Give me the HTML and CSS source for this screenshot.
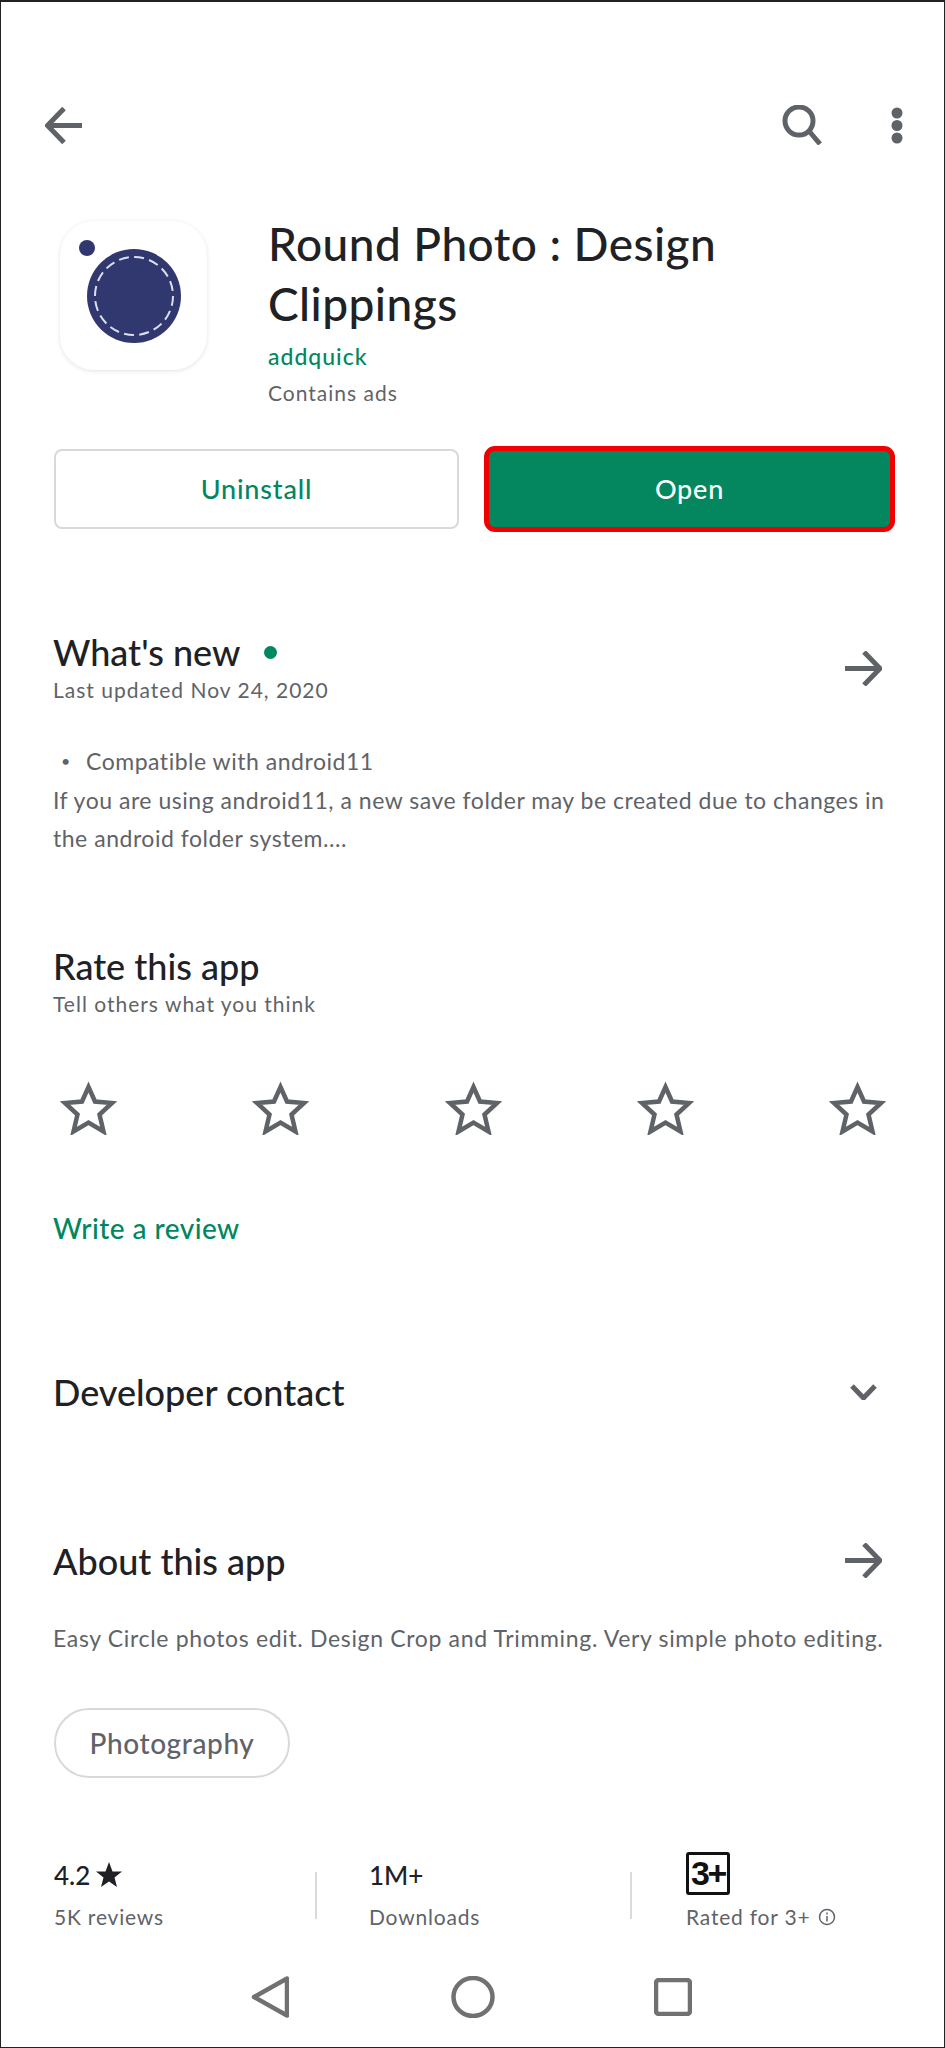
FILE: index.html
```html
<!DOCTYPE html>
<html lang="en">
<head>
<meta charset="utf-8">
<title>Round Photo : Design Clippings</title>
<link rel="stylesheet" href="styles.css">
</head>
<body>
<div class="page">
  <header class="topbar">
    <svg class="ic-back" viewBox="0 0 38 37"><path d="M37 18.500H3M19 1.500 2.500 18.500 19 35.500"/></svg>
    <div class="topbar-right">
      <svg class="ic-search" viewBox="0 0 41 40"><circle cx="18" cy="16" r="14"/><path d="M28 26 39 39"/></svg>
      <svg class="ic-dots" viewBox="0 0 14 38"><circle cx="7" cy="7" r="5.500"/><circle cx="7" cy="19.500" r="5.500"/><circle cx="7" cy="32" r="5.500"/></svg>
    </div>
  </header>

  <section class="hero">
    <svg class="app-icon" viewBox="0 0 147 149">
      <circle class="logo-fill" cx="27" cy="27" r="8"/>
      <circle class="logo-fill" cx="74" cy="75" r="47"/>
      <circle class="logo-stitch" cx="74" cy="75" r="39"/>
    </svg>
    <div class="hero-text">
      <h1 class="title">Round Photo : Design<br>Clippings</h1>
      <div class="dev">addquick</div>
      <div class="note">Contains ads</div>
    </div>
  </section>

  <div class="actions">
    <button class="btn btn-outline">Uninstall</button>
    <button class="btn btn-solid">Open</button>
  </div>

  <section class="whatsnew">
    <div class="row-head">
      <div>
        <h2 class="h2">What's new<span class="new-dot"></span></h2>
        <div class="sub">Last updated Nov 24, 2020</div>
      </div>
      <svg class="ic-forward" viewBox="0 0 37 35"><path d="M0 17.500H34M19 1 35 17.500 19 34"/></svg>
    </div>
    <div class="notes">
      <div class="bullet"><span class="bullet-mark">•</span>Compatible with android11</div>
      <div>If you are using android11, a new save folder may be created due to changes in</div>
      <div>the android folder system....</div>
    </div>
  </section>

  <section class="rate">
    <h2 class="h2">Rate this app</h2>
    <div class="sub">Tell others what you think</div>
    <div class="stars">
      <svg class="star" viewBox="0 0 57 54"><polygon points="28.500,6 35,20.500 52,22 39.500,33.500 43.500,50.500 28.500,41.500 13.500,50.500 17.500,33.500 5,22 22,20.500"/></svg>
      <svg class="star" viewBox="0 0 57 54"><polygon points="28.500,6 35,20.500 52,22 39.500,33.500 43.500,50.500 28.500,41.500 13.500,50.500 17.500,33.500 5,22 22,20.500"/></svg>
      <svg class="star" viewBox="0 0 57 54"><polygon points="28.500,6 35,20.500 52,22 39.500,33.500 43.500,50.500 28.500,41.500 13.500,50.500 17.500,33.500 5,22 22,20.500"/></svg>
      <svg class="star" viewBox="0 0 57 54"><polygon points="28.500,6 35,20.500 52,22 39.500,33.500 43.500,50.500 28.500,41.500 13.500,50.500 17.500,33.500 5,22 22,20.500"/></svg>
      <svg class="star" viewBox="0 0 57 54"><polygon points="28.500,6 35,20.500 52,22 39.500,33.500 43.500,50.500 28.500,41.500 13.500,50.500 17.500,33.500 5,22 22,20.500"/></svg>
    </div>
    <div class="write">Write a review</div>
  </section>

  <section class="developer row-head">
    <h2 class="h2">Developer contact</h2>
    <svg class="ic-chevron" viewBox="0 0 27 16"><path d="M2 2 13.500 14 25 2"/></svg>
  </section>

  <section class="about">
    <div class="row-head">
      <h2 class="h2">About this app</h2>
      <svg class="ic-forward" viewBox="0 0 37 35"><path d="M0 17.500H34M19 1 35 17.500 19 34"/></svg>
    </div>
    <p class="desc">Easy Circle photos edit. Design Crop and Trimming. Very simple photo editing.</p>
    <div class="chip">Photography</div>
  </section>

  <section class="stats">
    <div class="stat stat-first">
      <div class="stat-top"><span class="stat-val">4.2</span><svg class="ic-mini-star" viewBox="0 0 26 25"><polygon points="13,0 16.500,9.500 26,9.500 18.500,15.500 21,25 13,19.500 5,25 7.500,15.500 0,9.500 9.500,9.500"/></svg></div>
      <div class="stat-label">5K reviews</div>
    </div>
    <div class="stat">
      <div class="stat-top"><span class="stat-val">1M+</span></div>
      <div class="stat-label">Downloads</div>
    </div>
    <div class="stat stat-last">
      <div class="stat-top"><span class="rated-box">3+</span></div>
      <div class="stat-label">Rated for 3+<svg class="ic-info" viewBox="0 0 18 18"><circle cx="9" cy="9" r="7.500"/><path d="M9 8V13.500M9 4.500V6.500"/></svg></div>
    </div>
  </section>

  <nav class="navbar">
    <svg class="nav-back" viewBox="0 0 38 42"><path d="M36 2.500V39.500L3 21Z"/></svg>
    <svg class="nav-home" viewBox="0 0 44 42"><ellipse cx="22" cy="21" rx="19.500" ry="19"/></svg>
    <svg class="nav-recent" viewBox="0 0 38 38"><rect x="2" y="2" width="34" height="34" rx="3"/></svg>
  </nav>
</div>
</body>
</html>
```

FILE: styles.css
```css
* { box-sizing: border-box; }
html, body { margin: 0; padding: 0; background: #fff; }
.page {
  width: 945px;
  height: 2048px;
  border: 1px solid #222;
  border-top-width: 2px;
  padding-left: 53px;
  padding-right: 51px;
  overflow: hidden;
  font-family: "Lato", "Liberation Sans", sans-serif;
  color: #202124;
  background: #fff;
}
svg { display: block; flex: none; }

.topbar { display: flex; justify-content: space-between; align-items: center; height: 40px; margin-top: 103px; margin-left: -9px; margin-right: -7px; }
.topbar-right { display: flex; align-items: center; gap: 68px; }
.ic-back { width: 38px; height: 37px; fill: none; stroke: #5f6368; stroke-width: 5; }
.ic-search { width: 41px; height: 40px; fill: none; stroke: #5f6368; stroke-width: 5; }
.ic-dots { width: 14px; height: 38px; fill: #5f6368; margin-right: -4px; }

.hero { display: flex; margin-top: 69px; }
.app-icon {
  width: 147px; height: 149px; margin: 7px 0 0 6px;
  background: #fff; border-radius: 34px;
  box-shadow: 0 1px 4px rgba(60, 64, 67, .15);
}
.logo-fill { fill: #31376f; }
.logo-stitch { fill: none; stroke: #dcdfee; stroke-width: 2; stroke-dasharray: 10 5.300; }
.hero-text { margin-left: 61px; }
.title { margin: 0; font-size: 46px; line-height: 60px; font-weight: 500; letter-spacing: .45px; }
.dev { margin-top: 7px; font-size: 23px; line-height: 30px; color: #01875f; letter-spacing: 1px; font-weight: 500; }
.note { margin-top: 7px; font-size: 21px; line-height: 30px; color: #5f6368; letter-spacing: 1px; }

.actions { display: flex; align-items: center; gap: 25px; margin-top: 38px; }
.btn { font-family: inherit; font-size: 27px; font-weight: 500; letter-spacing: .8px; border-radius: 8px; padding: 0 0 2px; flex: none; }
.btn-outline { width: 405px; height: 80px; background: #fff; border: 2px solid #d8d9da; color: #01875f; }
.btn-solid { width: 411px; height: 86px; background: #04875f; border: 5px solid #f00000; color: #fff; border-radius: 11px; }

.row-head { display: flex; justify-content: space-between; align-items: flex-start; }
.h2 { margin: -1px 0 1px -1px; font-size: 36px; line-height: 44px; font-weight: 500; display: flex; align-items: center; }
.sub { margin-left: -1px; font-size: 21px; line-height: 30px; color: #5f6368; letter-spacing: 1px; }
.new-dot { width: 13px; height: 13px; border-radius: 50%; background: #01875f; margin: 0 0 0 24px; }
.ic-forward { width: 37px; height: 35px; fill: none; stroke: #5f6368; stroke-width: 5; margin: 20px 11px 0 0; }

.whatsnew { margin-top: 99px; }
.notes { margin: 37px 0 0 -1px; font-size: 23px; line-height: 38.500px; color: #5f6368; letter-spacing: .52px; white-space: nowrap; }
.bullet { display: flex; }
.bullet-mark { width: 33px; padding-left: 8px; font-size: 16px; }

.rate { margin-top: 87px; }
.stars { display: flex; justify-content: space-between; margin-top: 62px; margin-left: 6px; margin-right: 7px; }
.star { width: 57px; height: 54px; fill: none; stroke: #5f6368; stroke-width: 4.500; stroke-miterlimit: 10; }
.write { margin: 78px 0 0 -1px; font-size: 28px; line-height: 30px; font-weight: 500; color: #01875f; letter-spacing: .45px; }

.developer { margin-top: 128px; align-items: center; }
.ic-chevron { width: 27px; height: 16px; fill: none; stroke: #5f6368; stroke-width: 5; margin: -2px 16px 0 0; }

.about { margin-top: 125px; }
.about .ic-forward { margin-top: 3px; }
.desc { margin: 39px 0 0 -1px; font-size: 23px; line-height: 30px; color: #5f6368; letter-spacing: .66px; white-space: nowrap; }
.chip {
  width: 236px; height: 70px; margin-top: 55px;
  display: flex; align-items: center; justify-content: center;
  border: 2px solid #d8d9da; border-radius: 35px;
  font-size: 28px; font-weight: 500; color: #5f6368; letter-spacing: .6px;
}

.stats { display: flex; margin-top: 74px; }
.stat { flex: none; width: 261px; }
.stat + .stat { padding-left: 54px; width: 315px; position: relative; }
.stat + .stat.stat-last { padding-left: 56px; }
.stat + .stat::before { content: ""; position: absolute; left: 0; top: 20px; width: 2px; height: 47px; background: #dadbdc; }
.stat-top { height: 43px; display: flex; align-items: center; gap: 6px; }
.stat-val { font-size: 26px; line-height: 30px; font-weight: 500; margin-top: 3px; }
.ic-mini-star { width: 26px; height: 25px; fill: #202124; margin-top: 3px; }
.rated-box {
  width: 44px; height: 43px; border: 3px solid #111; border-radius: 3px;
  display: flex; align-items: center; justify-content: center;
  font-family: "Liberation Sans", sans-serif; font-weight: 700; font-size: 34px; letter-spacing: -2.500px; color: #111;
}
.stat-label { margin-top: 7px; font-size: 21px; line-height: 30px; color: #5f6368; letter-spacing: .8px; display: flex; align-items: center; gap: 8px; white-space: nowrap; }
.ic-info { width: 18px; height: 18px; fill: none; stroke: #5f6368; stroke-width: 1.500; }

.navbar { display: flex; margin-top: 44px; padding-left: 197px; align-items: center; }
.nav-back { width: 38px; height: 42px; fill: none; stroke: #6f7173; stroke-width: 4.500; stroke-linejoin: round; }
.nav-home { width: 44px; height: 42px; fill: none; stroke: #6f7173; stroke-width: 4.500; margin-left: 162px; }
.nav-recent { width: 38px; height: 38px; fill: none; stroke: #6f7173; stroke-width: 4.500; margin-left: 159px; }
```
